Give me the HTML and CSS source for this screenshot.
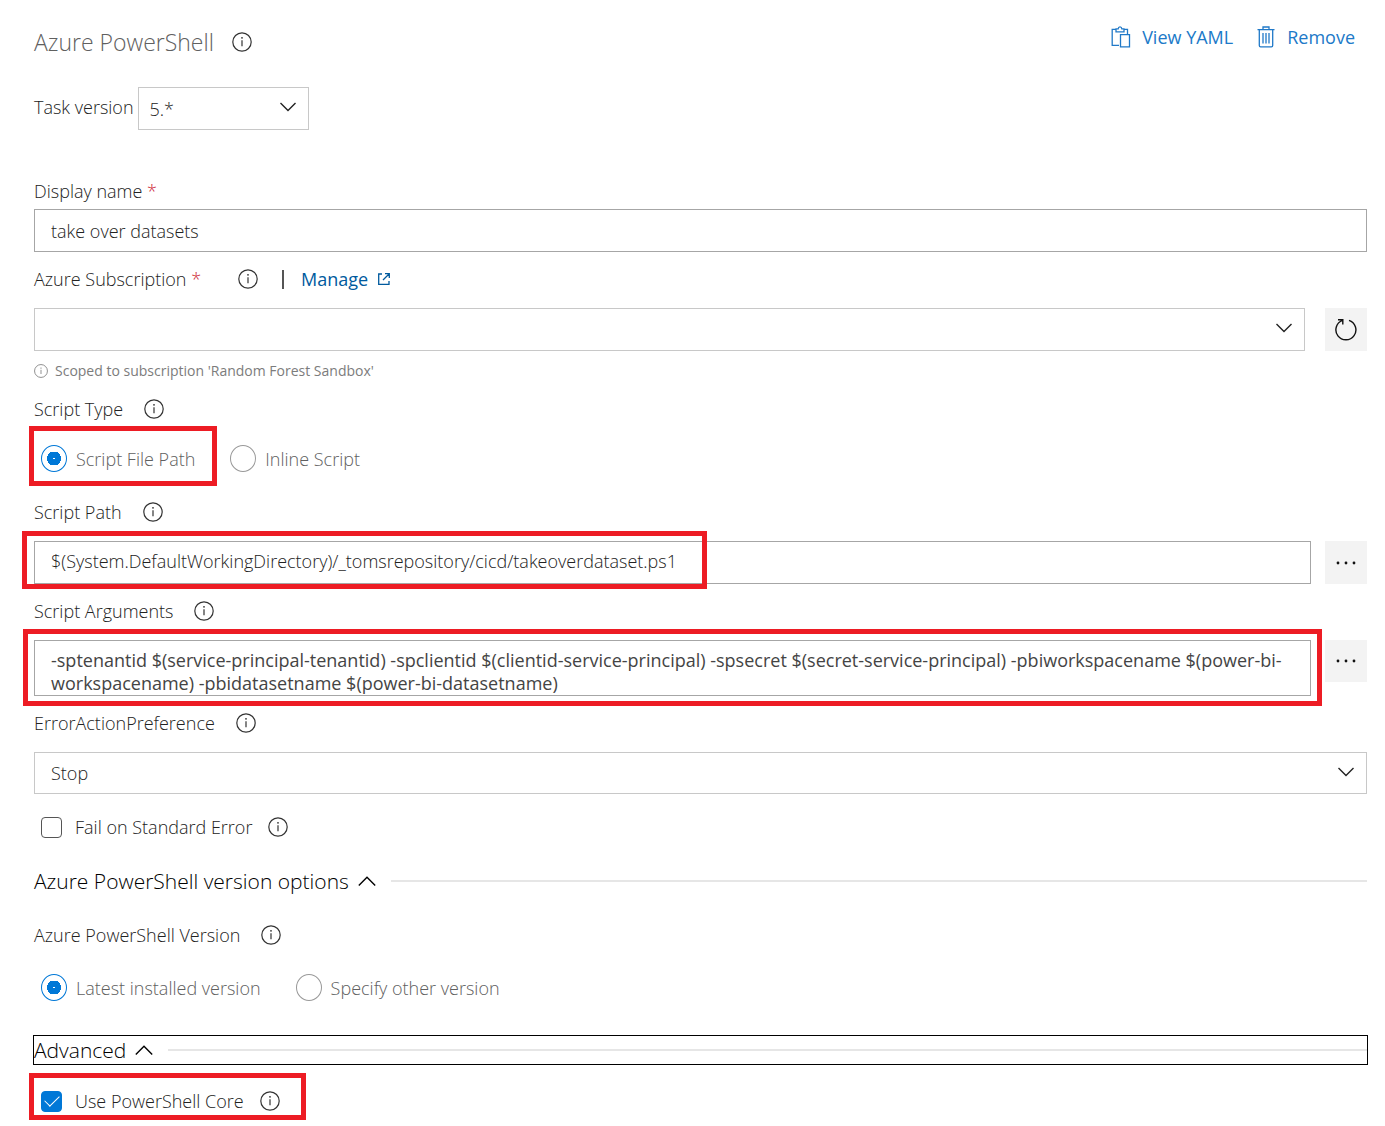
FILE: index.html
```html
<!DOCTYPE html>
<html lang="en">
<head>
<meta charset="utf-8">
<title>Azure PowerShell</title>
<meta name="viewport" content="width=device-width, initial-scale=1">
<link rel="stylesheet" href="styles.css">
</head>
<body>
<svg class="sprite" aria-hidden="true">
  <symbol id="info" viewBox="0 0 20 20"><circle cx="10" cy="10" r="9.2" fill="none" stroke="currentColor" stroke-width="1.2"/><path d="M10 8.3v6" fill="none" stroke="currentColor" stroke-width="1.2"/><circle cx="10" cy="5.8" r=".9" fill="currentColor"/></symbol>
  <symbol id="down" viewBox="0 0 18 10"><path d="M1.5 1 9 8.5 16.500 1" fill="none" stroke="currentColor" stroke-width="1.4"/></symbol>
  <symbol id="up" viewBox="0 0 18 12"><path d="M.8 10.500 9 2.300l8.200 8.200" fill="none" stroke="currentColor" stroke-width="1.4"/></symbol>
</svg>
<form class="task">
  <header class="header">
    <div class="header-title">
      <h1>Azure PowerShell</h1>
      <button type="button" class="info" aria-label="About this task"><svg><use href="#info"/></svg></button>
    </div>
    <div class="actions">
      <button type="button" class="action"><svg viewBox="0 0 20 22" fill="none" stroke="currentColor" stroke-width="1.3"><path d="M8 19.400H1.200V3.300H5M13 3.300h3.500v5M5 2.800h2.200C7.300 1.500 8 .8 9 .8s1.700.7 1.800 2H13v3H5zM9.500 8.700h9v12.200h-9z"/></svg>View YAML</button>
      <button type="button" class="action"><svg viewBox="0 0 20 22" fill="none" stroke="currentColor" stroke-width="1.300"><path d="M1.500 3.700h17M7 3.500V1h6v2.500M3.300 3.700v15.800q0 1.300 1.300 1.300h10.800q1.300 0 1.300-1.300V3.700M7 7v10.500M10 7v10.500M13 7v10.500"/></svg>Remove</button>
    </div>
  </header>

  <div class="version">
    <label for="version">Task version</label>
    <div class="select select-version"><select id="version"><option>5.*</option></select><svg><use href="#down"/></svg></div>
  </div>

  <div class="label-row label-first"><label for="name">Display name <span class="required">*</span></label></div>
  <input class="box" id="name" type="text" value="take over datasets">

  <div class="label-row spaced">
    <label for="subscription">Azure Subscription <span class="required">*</span></label>
    <button type="button" class="info info-subscription" aria-label="About Azure Subscription"><svg><use href="#info"/></svg></button>
    <span class="divider"></span>
    <a class="manage" href="#manage">Manage <svg viewBox="0 0 12 12" fill="none" stroke="currentColor" stroke-width="1.300"><path d="M4 1H.7v10.300H11V8M5 7l6-6M7 .7h4.300V5"/></svg></a>
  </div>
  <div class="field field-refresh">
    <div class="select"><select id="subscription"><option></option></select><svg><use href="#down"/></svg></div>
    <button type="button" class="side" aria-label="Refresh"><svg width="22" height="22" viewBox="0 0 22 22" fill="none" stroke="currentColor" stroke-width="1.400"><path d="M14 1.300A10 10 0 1 1 7.500 1.400M3 .8H7.800V5.500"/></svg></button>
  </div>
  <p class="hint"><svg><use href="#info"/></svg>Scoped to subscription 'Random Forest Sandbox'</p>

  <fieldset>
    <legend class="label-row">Script Type <button type="button" class="info" aria-label="About Script Type"><svg><use href="#info"/></svg></button></legend>
    <div class="radios">
      <label class="choice marked"><input type="radio" name="type" checked>Script File Path<span class="mark mark-radio"></span></label>
      <label class="choice"><input type="radio" name="type">Inline Script</label>
    </div>
  </fieldset>

  <div class="label-row after-radios"><label for="path">Script Path</label><button type="button" class="info" aria-label="About Script Path"><svg><use href="#info"/></svg></button></div>
  <div class="field">
    <div class="marked grow"><input class="box box-path" id="path" type="text" value="$(System.DefaultWorkingDirectory)/_tomsrepository/cicd/takeoverdataset.ps1"><span class="mark mark-path"></span></div>
    <button type="button" class="side" aria-label="Browse script path"><svg width="20" height="4" viewBox="0 0 20 4" fill="currentColor"><circle cx="2" cy="2" r="1.400"/><circle cx="10" cy="2" r="1.400"/><circle cx="18" cy="2" r="1.400"/></svg></button>
  </div>

  <div class="label-row spaced"><label for="args">Script Arguments</label><button type="button" class="info" aria-label="About Script Arguments"><svg><use href="#info"/></svg></button></div>
  <div class="field">
    <div class="marked grow"><textarea class="box" id="args" rows="2">-sptenantid $(service-principal-tenantid) -spclientid $(clientid-service-principal) -spsecret $(secret-service-principal) -pbiworkspacename $(power-bi-workspacename) -pbidatasetname $(power-bi-datasetname)</textarea><span class="mark mark-args"></span></div>
    <button type="button" class="side side-short" aria-label="Edit script arguments"><svg width="20" height="4" viewBox="0 0 20 4" fill="currentColor"><circle cx="2" cy="2" r="1.400"/><circle cx="10" cy="2" r="1.400"/><circle cx="18" cy="2" r="1.400"/></svg></button>
  </div>

  <div class="label-row spaced"><label for="error">ErrorActionPreference</label><button type="button" class="info" aria-label="About ErrorActionPreference"><svg><use href="#info"/></svg></button></div>
  <div class="select select-error"><select id="error"><option>Stop</option></select><svg><use href="#down"/></svg></div>

  <div class="check check-error">
    <label class="choice"><input type="checkbox">Fail on Standard Error</label>
    <button type="button" class="info" aria-label="About Fail on Standard Error"><svg><use href="#info"/></svg></button>
  </div>

  <h2 class="section"><button type="button" aria-expanded="true">Azure PowerShell version options<svg><use href="#up"/></svg></button></h2>
  <fieldset class="version-options">
    <legend class="label-row">Azure PowerShell Version <button type="button" class="info" aria-label="About Azure PowerShell Version"><svg><use href="#info"/></svg></button></legend>
    <div class="radios">
      <label class="choice"><input type="radio" name="installed" checked>Latest installed version</label>
      <label class="choice"><input type="radio" name="installed">Specify other version</label>
    </div>
  </fieldset>

  <h2 class="section focused"><button type="button" aria-expanded="true">Advanced<svg><use href="#up"/></svg></button></h2>
  <div class="check marked">
    <label class="choice"><input type="checkbox" checked>Use PowerShell Core</label>
    <button type="button" class="info" aria-label="About Use PowerShell Core"><svg><use href="#info"/></svg></button>
    <span class="mark mark-core"></span>
  </div>
</form>
</body>
</html>
```
FILE: styles.css
```css
* { box-sizing: border-box; }
body {
  margin: 0;
  background: #fff;
  color: #222;
  font: 300 18px/24px "Open Sans", "Noto Sans", sans-serif;
}
button, input, select, textarea { font: inherit; color: inherit; margin: 0; }
button { border: 0; padding: 0; background: none; cursor: pointer; }
svg { display: block; flex: none; }
.sprite { position: absolute; width: 0; height: 0; }
.task { padding: 24px 18px 13px 34px; }

.header { display: flex; justify-content: space-between; align-items: flex-start; }
.header-title { display: flex; align-items: center; gap: 18px; height: 36px; }
h1 { margin: 0; font-size: 23px; line-height: 36px; font-weight: 300; color: #606060; }
.actions { display: flex; gap: 23px; padding-right: 12px; }
.action { display: flex; align-items: center; gap: 11px; height: 26px; font-weight: 400; color: #2079c8; }
.action svg { width: 20px; height: 22px; }
.info { color: #333; }
.info svg { width: 20px; height: 20px; }

.version { display: flex; align-items: flex-start; gap: 4px; margin-top: 27px; }
.version label { line-height: 40px; }
.select { position: relative; flex: 1; }
.select-version { flex: none; width: 171px; }
.select select {
  display: block;
  width: 100%;
  height: 43px;
  padding: 0 48px 0 16px;
  border: 1px solid #c8c8c8;
  border-radius: 0;
  background: #fff;
  appearance: none;
}
.select-version select { padding-left: 11px; }
.select-error select { height: 42px; }
.select svg { position: absolute; right: 12px; top: 15px; width: 18px; height: 10px; pointer-events: none; }

.label-row { display: flex; align-items: center; gap: 21px; height: 24px; padding: 0; margin-bottom: 17px; }
.label-first { margin: 49px 0 6px; }
.spaced { margin-top: 15px; }
.required { color: #cd2535; }
.info-subscription { margin-left: 16px; }
.divider { width: 2px; height: 19px; margin-left: 3px; background: #555; }
.manage { display: flex; align-items: center; gap: 10px; margin-left: -4px; color: #005a9e; font-weight: 400; text-decoration: none; }
.manage svg { width: 12px; height: 12px; }

.box {
  display: block;
  width: 100%;
  height: 43px;
  padding: 0 16px;
  border: 1px solid #a6a6a6;
  border-radius: 0;
  background: #fff;
}
.box-path { padding-bottom: 3px; }
textarea.box { height: 56px; padding: 8px 16px 0; line-height: 23px; font-weight: 400; color: #444; resize: none; overflow: hidden; }
.field { display: flex; align-items: flex-start; gap: 14px; }
.field-refresh { gap: 20px; }
.grow { flex: 1; }
.side { display: flex; align-items: center; justify-content: center; flex: none; width: 42px; height: 43px; background: #f3f3f3; color: #111; }
.side-short { height: 42px; }
.hint { display: flex; align-items: center; gap: 7px; margin: 8px 0 14px; font-size: 14px; font-weight: 400; color: #7c7c7c; }
.hint svg { width: 14px; height: 14px; }

fieldset { margin: 0; padding: 0; border: 0; min-width: 0; }
fieldset .label-row { margin-bottom: 24px; }
.radios { display: flex; gap: 35px; padding-left: 7px; }
.choice { display: flex; align-items: center; gap: 9px; }
.radios .choice { color: #606060; }
input[type="radio"] {
  appearance: none;
  width: 26px;
  height: 27px;
  border: 1px solid #999;
  border-radius: 50%;
}
input[type="radio"]:checked {
  border-color: #0078d7;
  background: radial-gradient(circle, #fff 0 1px, #0078d7 1px 7px, #fff 7px);
}
.after-radios { margin-top: 28px; }

.check { display: flex; align-items: center; gap: 16px; padding-left: 7px; }
.check .choice { gap: 13px; }
.check-error { margin-top: 21px; }
input[type="checkbox"] {
  appearance: none;
  width: 21px;
  height: 21px;
  border: 1px solid #555;
  border-radius: 4px;
}
input[type="checkbox"]:checked {
  display: grid;
  place-items: center;
  border-color: #0078d7;
  background: #0078d7;
}
input[type="checkbox"]:checked::after {
  content: "";
  width: 13px;
  height: 7px;
  border: solid #fff;
  border-width: 0 0 1px 1px;
  transform: translateY(-2px) rotate(-45deg);
}

.section { display: flex; align-items: center; gap: 15px; margin: 28px 0; height: 28px; font-weight: 300; font-size: 21px; color: #000; }
.section::after { content: ""; flex: 1; height: 2px; background: #e6e6e6; }
.section button { display: flex; align-items: center; gap: 9px; }
.section svg { width: 18px; height: 12px; }
.focused { margin: 35px 0 25px; outline: 1px solid #000; }
.version-options .label-row { margin-bottom: 27px; }

.marked { position: relative; }
.mark { position: absolute; border: 5px solid #ed1c24; pointer-events: none; }
.mark-radio { inset: -19px -22px -14px -12px; }
.mark-path { left: -12px; top: -10px; bottom: -5px; width: 685px; }
.mark-args { inset: -11px -11px -10px; }
.mark-core { left: -5px; top: -16px; width: 277px; height: 47px; }
```
